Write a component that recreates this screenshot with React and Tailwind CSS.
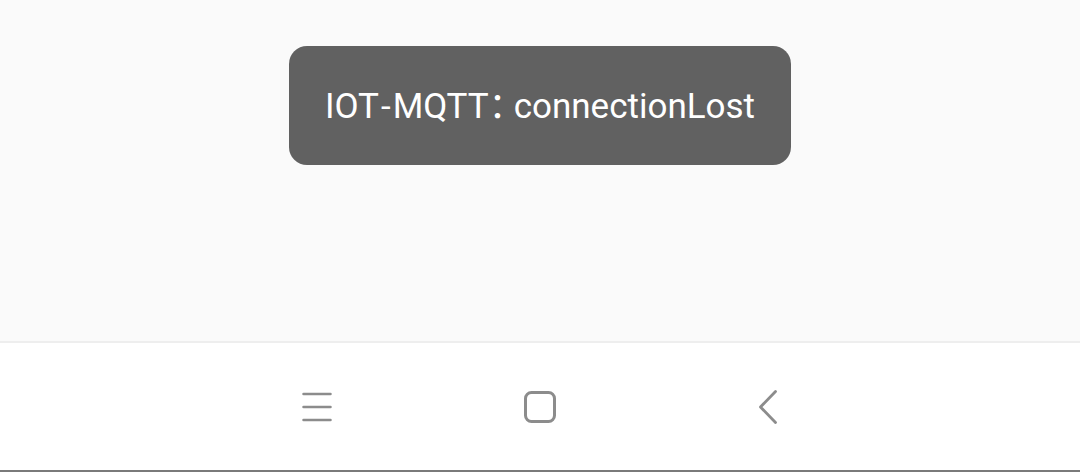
export default function App() {
  return (
    <div className="w-[1080px] h-[472px] flex flex-col bg-white font-['Roboto','Noto_Sans_CJK_SC',sans-serif]">
      {/* content area with toast */}
      <div className="h-[341px] bg-[#fafafa] flex justify-center pt-[46px]">
        <div className="w-[502px] h-[119px] rounded-[18px] bg-[#616161] flex items-center justify-center">
          <span className="text-white text-[35px] leading-none whitespace-nowrap pt-[2px]">
            IOT<span className="mx-[2px]">-</span>MQTT<span className="tracking-[-10px]">：</span>connectionLost
          </span>
        </div>
      </div>
      <div className="h-[2px] bg-[#eeeeee]" />

      {/* navigation bar */}
      <div className="flex-1 bg-white flex items-center pl-[301px]">
        <svg width="32" height="32" viewBox="0 0 32 32" fill="none" stroke="#8c8c8c" strokeWidth="2.5" strokeLinecap="round">
          <path d="M2.5 3h27M2.5 16h27M2.5 29h27" />
        </svg>
        <svg className="ml-[189px]" width="36" height="36" viewBox="0 0 36 36" fill="none" stroke="#8c8c8c" strokeWidth="3">
          <rect x="3.5" y="3.5" width="29" height="29" rx="6" />
        </svg>
        <svg className="ml-[198px]" width="22" height="36" viewBox="0 0 22 36" fill="none" stroke="#8c8c8c" strokeWidth="2.8" strokeLinecap="round" strokeLinejoin="round">
          <path d="M19.5 2.5L4.5 18l15 15.5" />
        </svg>
      </div>
      <div className="h-[2px] bg-[#7a7a7a]" />
    </div>
  );
}
